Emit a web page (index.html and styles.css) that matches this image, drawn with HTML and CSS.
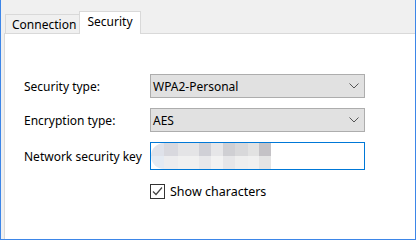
FILE: index.html
```html
<!DOCTYPE html>
<html>
<head>
<meta charset="utf-8">
<link rel="stylesheet" href="styles.css">
</head>
<body>
<div class="frame">
  <div class="tabs">
    <div class="tab">Connection</div>
    <div class="tab active">Security</div>
  </div>
  <div class="panel">
    <div class="form">
      <div class="label">Security type:</div>
      <div class="combo"><span>WPA2-Personal</span>
        <svg class="chev" width="10" height="6" viewBox="0 0 10 6"><path d="M0.5 0.5 L5 5 L9.5 0.5" fill="none" stroke="#555" stroke-width="1"/></svg>
      </div>
      <div class="label">Encryption type:</div>
      <div class="combo"><span>AES</span>
        <svg class="chev" width="10" height="6" viewBox="0 0 10 6"><path d="M0.5 0.5 L5 5 L9.5 0.5" fill="none" stroke="#555" stroke-width="1"/></svg>
      </div>
      <div class="label">Network security key</div>
      <div class="field"><div class="blur"><div class="blur-top"></div><div class="blur-bottom"></div></div></div>
      <div></div>
      <label class="check">
        <span class="box"><svg width="13" height="13" viewBox="0 0 13 13"><path d="M2 6.5 L5 9.5 L11 2.5" fill="none" stroke="#444" stroke-width="1.2"/></svg></span>
        <span class="check-text">Show characters</span>
      </label>
    </div>
  </div>
</div>
</body>
</html>
```
FILE: styles.css
```css
html, body {
  margin: 0;
  padding: 0;
}
body {
  width: 416px;
  height: 240px;
  overflow: hidden;
  font-family: "Noto Sans", "Open Sans", sans-serif;
  font-size: 12px;
  color: #000;
}
.frame {
  box-sizing: border-box;
  width: 416px;
  height: 240px;
  background: #f0f0f0;
  border: 1px solid #3d86e8;
  border-top: none;
  padding-left: 3px;
  display: flex;
  flex-direction: column;
}
.tabs {
  height: 33px;
  display: flex;
  align-items: flex-end;
  padding-left: 1px;
  flex: none;
}
.tab {
  box-sizing: border-box;
  height: 20px;
  padding: 0 6px;
  width: 75px;
  margin-right: -1px;
  margin-bottom: -1px;
  border: 1px solid #d9d9d9;
  border-bottom: none;
  background: #f0f0f0;
  line-height: 19px;
  text-align: center;
}
.tab.active {
  width: 62px;
  height: 23px;
  background: #fff;
  position: relative;
  z-index: 1;
  line-height: 20px;
}
.panel {
  flex: 1;
  background: #fff;
  border-top: 1px solid #d9d9d9;
  border-left: 1px solid #d9d9d9;
  padding: 40px 0 0 19px;
}
.form {
  display: grid;
  grid-template-columns: 126px 215px;
  grid-template-rows: 24px 24px 28px 16px;
  row-gap: 10px;
  align-items: center;
}
.form > :nth-last-child(-n+2) {
  margin-top: 7px;
}
.label {
  white-space: nowrap;
}
.combo {
  box-sizing: border-box;
  height: 24px;
  background: #e1e1e1;
  border: 1px solid #adadad;
  display: flex;
  align-items: center;
  justify-content: space-between;
  padding: 0 5px 0 2px;
}
.chev {
  display: block;
}
.field {
  box-sizing: border-box;
  height: 28px;
  border: 1px solid #0078d7;
  display: flex;
}
.blur {
  width: 120px;
  height: 26px;
  border-radius: 13px 0 0 13px;
  overflow: hidden;
  display: flex;
  flex-direction: column;
}
.blur-top {
  height: 13px;
  background: linear-gradient(to right,
    #dfe2ea 0 13px, #d8d8de 13px 27px, #e4e4e6 27px 48px, #d0d0d6 48px 60px,
    #e6e6e8 60px 72px, #cfcfd3 72px 84px, #d8d8da 84px 97px, #e2e2e2 97px 108px, #c4c2c6 108px 120px);
}
.blur-bottom {
  height: 13px;
  background: linear-gradient(to right,
    #e4eaf2 0 13px, #ececee 13px 27px, #f0f0f0 27px 48px, #e8e8ea 48px 60px,
    #f2f2f2 60px 72px, #e6e6e8 72px 84px, #eeeeee 84px 97px, #f0f0f0 97px 108px, #e4e4e4 108px 120px);
}
.check {
  display: flex;
  align-items: center;
  gap: 5px;
}
.check-text {
  font-size: 12.5px;
}
.box {
  box-sizing: border-box;
  width: 15px;
  height: 15px;
  border: 1px solid #333;
  display: flex;
  align-items: center;
  justify-content: center;
}
.box svg {
  display: block;
}
```
